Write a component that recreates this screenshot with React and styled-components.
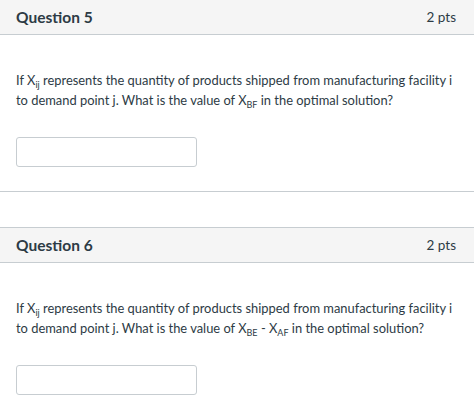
import styled, { createGlobalStyle } from "styled-components";

const GlobalStyle = createGlobalStyle`
  body {
    margin: 0;
    background: #fff;
    font-family: Lato, "Open Sans", sans-serif;
    color: #2d3b45;
  }
`;

const Page = styled.div`
  width: 474px;
  display: flex;
  flex-direction: column;
`;

const Question = styled.section`
  border-top: ${({ $first }) => ($first ? "none" : "1px solid #c7cdd1")};
  margin-top: ${({ $first }) => ($first ? "0" : "35px")};
  border-bottom: ${({ $last }) => ($last ? "none" : "1px solid #c7cdd1")};
`;

const Header = styled.header`
  display: flex;
  justify-content: space-between;
  align-items: center;
  height: 34px;
  padding: 0 18px 0 16px;
  background: #f5f5f5;
  border-bottom: 1px solid #c7cdd1;
`;

const Title = styled.h2`
  margin: 0;
  font-size: 15.5px;
  font-weight: 700;
  color: #2d3b45;
`;

const Points = styled.span`
  font-size: 13.5px;
  color: #2d3b45;
`;

const Body = styled.div`
  padding: 35px 16px 24px;
`;

const Text = styled.p`
  margin: 0;
  max-width: 442px;
  font-size: 12.9px;
  line-height: 20px;
  color: #2d3b45;
`;

const Sub = styled.sub`
  font-size: 9px;
  vertical-align: -3px;
  line-height: 0;
`;

const Answer = styled.input`
  display: block;
  box-sizing: border-box;
  width: 181px;
  height: 30px;
  margin-top: 27px;
  border: 1px solid #c7cdd1;
  border-radius: 3px;
  background: #fff;
`;

function App() {
  return (
    <Page>
      <GlobalStyle />
      <Question $first>
        <Header>
          <Title>Question 5</Title>
          <Points>2 pts</Points>
        </Header>
        <Body>
          <Text>
            If X<Sub>ij</Sub> represents the quantity of products shipped from manufacturing facility i
            to demand point j. What is the value of X<Sub>BF</Sub> in the optimal solution?
          </Text>
          <Answer type="text" />
        </Body>
      </Question>
      <Question $last>
        <Header>
          <Title>Question 6</Title>
          <Points>2 pts</Points>
        </Header>
        <Body>
          <Text>
            If X<Sub>ij</Sub> represents the quantity of products shipped from manufacturing facility i
            to demand point j. What is the value of X<Sub>BE</Sub> - X<Sub>AF</Sub> in the optimal solution?
          </Text>
          <Answer type="text" />
        </Body>
      </Question>
    </Page>
  );
}

export default App;
